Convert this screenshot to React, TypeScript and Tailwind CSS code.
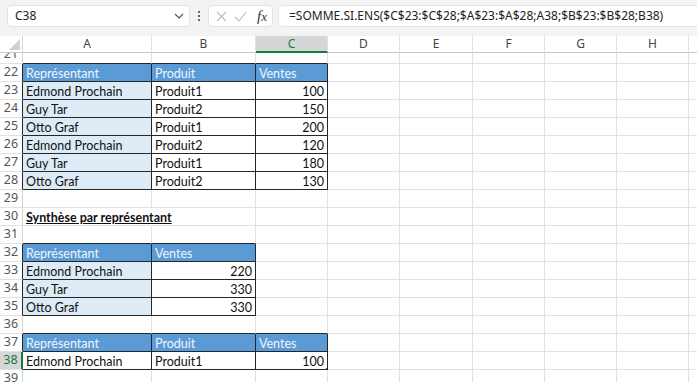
import React from 'react';

const COLW = ['w-[129px]', 'w-[104px]', 'w-[72px]', 'w-[72px]', 'w-[73px]', 'w-[72px]', 'w-[72px]', 'w-[72px]', 'w-[72px]'];
const LETTERS = ['A', 'B', 'C', 'D', 'E', 'F', 'G', 'H', 'I'];
const ROWS = [21, 22, 23, 24, 25, 26, 27, 28, 29, 30, 31, 32, 33, 34, 35, 36, 37, 38, 39];

type Kind = 'h' | 'name' | 'txt' | 'num' | 'title';
const DATA: Record<string, { t: string; k: Kind }> = {
  '22,1': { t: 'Représentant', k: 'h' },
  '22,2': { t: 'Produit', k: 'h' },
  '22,3': { t: 'Ventes', k: 'h' },
  '23,1': { t: 'Edmond Prochain', k: 'name' },
  '23,2': { t: 'Produit1', k: 'txt' },
  '23,3': { t: '100', k: 'num' },
  '24,1': { t: 'Guy Tar', k: 'name' },
  '24,2': { t: 'Produit2', k: 'txt' },
  '24,3': { t: '150', k: 'num' },
  '25,1': { t: 'Otto Graf', k: 'name' },
  '25,2': { t: 'Produit1', k: 'txt' },
  '25,3': { t: '200', k: 'num' },
  '26,1': { t: 'Edmond Prochain', k: 'name' },
  '26,2': { t: 'Produit2', k: 'txt' },
  '26,3': { t: '120', k: 'num' },
  '27,1': { t: 'Guy Tar', k: 'name' },
  '27,2': { t: 'Produit1', k: 'txt' },
  '27,3': { t: '180', k: 'num' },
  '28,1': { t: 'Otto Graf', k: 'name' },
  '28,2': { t: 'Produit2', k: 'txt' },
  '28,3': { t: '130', k: 'num' },
  '30,1': { t: 'Synthèse par représentant', k: 'title' },
  '32,1': { t: 'Représentant', k: 'h' },
  '32,2': { t: 'Ventes', k: 'h' },
  '33,1': { t: 'Edmond Prochain', k: 'name' },
  '33,2': { t: '220', k: 'num' },
  '34,1': { t: 'Guy Tar', k: 'name' },
  '34,2': { t: '330', k: 'num' },
  '35,1': { t: 'Otto Graf', k: 'name' },
  '35,2': { t: '330', k: 'num' },
  '37,1': { t: 'Représentant', k: 'h' },
  '37,2': { t: 'Produit', k: 'h' },
  '37,3': { t: 'Ventes', k: 'h' },
  '38,1': { t: 'Edmond Prochain', k: 'txt' },
  '38,2': { t: 'Produit1', k: 'txt' },
  '38,3': { t: '100', k: 'num' },
};

function inTable(r: number, c: number) {
  if (r >= 22 && r <= 28 && c >= 1 && c <= 3) return true;
  if (r >= 32 && r <= 35 && c >= 1 && c <= 2) return true;
  if (r >= 37 && r <= 38 && c >= 1 && c <= 3) return true;
  return false;
}

const KIND: Record<Kind, string> = {
  h: 'bg-[#5b9bd5] text-[#eef5fc] pl-[3px]',
  name: 'bg-[#ddebf7] text-[#111] pl-[3px]',
  txt: 'text-[#111] pl-[3px]',
  num: 'text-[#111] justify-end pr-[3px]',
  title: 'text-[#111] pl-[3px] font-bold underline overflow-visible z-10',
};

function Cell({ r, c }: { r: number; c: number }) {
  const d = DATA[`${r},${c}`];
  const darkR = inTable(r, c) || inTable(r, c + 1);
  const darkB = inTable(r, c) || inTable(r + 1, c);
  const noR = r === 30 && c === 1;
  const rb = noR ? 'border-r border-r-transparent' : darkR ? 'border-r border-r-[#262626]' : 'border-r border-r-[#e1e1e1]';
  const bb = darkB ? 'border-b border-b-[#262626]' : 'border-b border-b-[#e1e1e1]';
  const sel = r === 38 && c === 3;
  return (
    <div
      className={`relative shrink-0 h-full flex items-end pb-[1px] whitespace-nowrap ${
        d && d.k === 'title' ? '' : 'overflow-hidden'
      } ${COLW[c - 1]} ${rb} ${bb} ${d ? KIND[d.k] : ''}`}
    >
      {d ? <span className="leading-none">{d.t}</span> : null}
      {sel ? (
        <div className="absolute left-[-2px] top-[-2px] right-[-2px] bottom-[-2px] border-2 border-[#107c41] pointer-events-none" />
      ) : null}
      {sel ? (
        <div className="absolute right-[-5px] bottom-[-5px] w-[7px] h-[7px] bg-[#107c41] border border-white z-20" />
      ) : null}
    </div>
  );
}

function RowHeader({ r }: { r: number }) {
  const active = r === 38;
  const rb = active
    ? 'border-r-2 border-r-[#107c41]'
    : inTable(r, 1)
    ? 'border-r border-r-[#262626]'
    : 'border-r border-r-[#d4d4d4]';
  return (
    <div
      className={`shrink-0 w-[23px] h-full flex items-center justify-center border-b border-b-[#e1e1e1] ${rb} ${
        active ? 'bg-[#d6d6d6] text-[#107c41]' : 'bg-white text-[#555]'
      } font-['Noto_Sans',sans-serif] text-[12.5px] leading-none`}
    >
      {r}
    </div>
  );
}

function Toolbar() {
  return (
    <div className="h-[36px] bg-[#f3f3f3] flex items-start pt-[5px] pl-[7px] font-['Noto_Sans',sans-serif]">
      <div className="shrink-0 w-[183px] h-[22px] bg-white border border-[#e3e3e3] rounded-[4px] flex items-center justify-between pl-[7px] pr-[5px]">
        <span className="text-[12px] text-[#222] leading-none">C38</span>
        <svg width="10" height="6" viewBox="0 0 10 6">
          <path d="M1 1 L5 5 L9 1" fill="none" stroke="#555" strokeWidth="1.2" />
        </svg>
      </div>
      <div className="shrink-0 w-[18px] h-[22px] flex items-center justify-center">
        <svg width="4" height="12" viewBox="0 0 4 12">
          <circle cx="2" cy="2" r="1.1" fill="#444" />
          <circle cx="2" cy="6" r="1.1" fill="#444" />
          <circle cx="2" cy="10" r="1.1" fill="#444" />
        </svg>
      </div>
      <div className="shrink-0 w-[65px] h-[22px] bg-white border border-[#e3e3e3] rounded-[4px] flex items-center pl-[7px]">
        <svg width="11" height="11" viewBox="0 0 11 11">
          <path d="M1 1 L10 10 M10 1 L1 10" stroke="#bdbdbd" strokeWidth="1.1" fill="none" />
        </svg>
        <svg width="13" height="11" viewBox="0 0 13 11" className="ml-[7px]">
          <path d="M1 6 L5 10 L12 1" stroke="#bdbdbd" strokeWidth="1.1" fill="none" />
        </svg>
        <span className="ml-[10px] font-['Liberation_Serif',serif] italic text-[15px] text-[#333] leading-none">
          f<span className="text-[13px]">x</span>
        </span>
      </div>
      <div className="shrink-0 ml-[5px] w-[440px] h-[22px] bg-white border border-[#e3e3e3] rounded-[4px] flex items-center pl-[10px]">
        <span className="text-[12px] text-[#222] leading-none whitespace-nowrap">
          =SOMME.SI.ENS($C$23:$C$28;$A$23:$A$28;A38;$B$23:$B$28;B38)
        </span>
      </div>
    </div>
  );
}

function ColHeaders() {
  return (
    <div className="h-[17px] flex bg-white font-['Noto_Sans',sans-serif] text-[12px] leading-none">
      <div className="relative shrink-0 w-[23px] h-full border-r border-r-[#d4d4d4] border-b border-b-[#c8c8c8]">
        <svg width="11" height="11" viewBox="0 0 11 11" className="absolute right-[2px] bottom-[2px]">
          <path d="M11 0 L11 11 L0 11 Z" fill="#d0d0d0" />
        </svg>
      </div>
      {LETTERS.map((l, i) => (
        <div
          key={l}
          className={`shrink-0 h-full flex items-center justify-center border-r border-r-[#e1e1e1] ${COLW[i]} ${
            l === 'C'
              ? 'bg-[#d6d6d6] text-[#107c41] border-b-2 border-b-[#107c41]'
              : 'text-[#444] border-b border-b-[#c8c8c8]'
          }`}
        >
          {l === 'I' ? '' : l}
        </div>
      ))}
    </div>
  );
}

export default function App() {
  return (
    <div className="w-[697px] h-[382px] overflow-hidden bg-white">
      <Toolbar />
      <ColHeaders />
      <div className="h-[329px] overflow-hidden">
        <div className="-mt-[7px] font-['Lato',sans-serif] text-[12.5px]">
          {ROWS.map((r) => (
            <div key={r} className="flex h-[18px]">
              <RowHeader r={r} />
              {LETTERS.map((_, i) => (
                <Cell key={i} r={r} c={i + 1} />
              ))}
            </div>
          ))}
        </div>
      </div>
    </div>
  );
}
